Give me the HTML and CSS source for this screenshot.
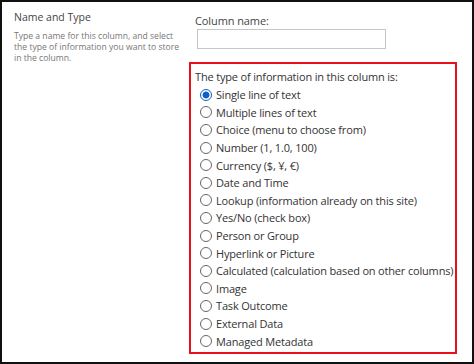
FILE: index.html
```html
<!DOCTYPE html>
<html>
<head>
<meta charset="utf-8">
<link rel="stylesheet" href="styles.css">
</head>
<body>
<div class="frame">
  <div class="left">
    <div class="section-title">Name and Type</div>
    <div class="section-desc">Type a name for this column, and select the type of information you want to store in the column.</div>
  </div>
  <div class="right">
    <div class="field-label">Column name:</div>
    <div class="text-input"></div>
    <div class="type-box">
      <div class="type-title">The type of information in this column is:</div>
      <ul class="options">
        <li class="option"><span class="radio checked"></span>Single line of text</li>
        <li class="option"><span class="radio"></span>Multiple lines of text</li>
        <li class="option"><span class="radio"></span>Choice (menu to choose from)</li>
        <li class="option"><span class="radio"></span>Number (1, 1.0, 100)</li>
        <li class="option"><span class="radio"></span>Currency ($, ¥, €)</li>
        <li class="option"><span class="radio"></span>Date and Time</li>
        <li class="option"><span class="radio"></span>Lookup (information already on this site)</li>
        <li class="option"><span class="radio"></span>Yes/No (check box)</li>
        <li class="option"><span class="radio"></span>Person or Group</li>
        <li class="option"><span class="radio"></span>Hyperlink or Picture</li>
        <li class="option"><span class="radio"></span>Calculated (calculation based on other columns)</li>
        <li class="option"><span class="radio"></span>Image</li>
        <li class="option"><span class="radio"></span>Task Outcome</li>
        <li class="option"><span class="radio"></span>External Data</li>
        <li class="option"><span class="radio"></span>Managed Metadata</li>
      </ul>
    </div>
  </div>
</div>
</body>
</html>
```
FILE: styles.css
```css
html, body {
  margin: 0;
  padding: 0;
  background: #ffffff;
}
body {
  font-family: "Open Sans", "Noto Sans", sans-serif;
  color: #333333;
}
.frame {
  box-sizing: border-box;
  width: 474px;
  height: 364px;
  border: 2px solid #111111;
  display: flex;
  overflow: hidden;
}
.left {
  width: 187px;
  box-sizing: border-box;
  padding: 7px 8px 0 12px;
}
.section-title {
  font-size: 10.5px;
  line-height: 16px;
  color: #444444;
}
.section-desc {
  margin-top: 6px;
  font-size: 8.6px;
  line-height: 11px;
  color: #777777;
}
.right {
  flex: 1;
  padding-top: 11px;
}
.field-label {
  padding-left: 6px;
  font-size: 11px;
  line-height: 15px;
  color: #444444;
  letter-spacing: -0.1px;
}
.text-input {
  margin: 1px 0 0 8px;
  width: 187px;
  height: 18px;
  border: 1px solid #c6c6c6;
}
.type-box {
  margin-top: 13px;
  width: 268px;
  height: 292px;
  border: 2.5px solid #e8101a;
  padding: 5px 0 0 4px;
  box-sizing: border-box;
}
.type-title {
  font-size: 11px;
  line-height: 15px;
  color: #333333;
  letter-spacing: -0.17px;
}
.options {
  list-style: none;
  margin: 2px 0 0 0;
  padding: 0 0 0 5px;
}
.option {
  display: flex;
  align-items: center;
  height: 17.6px;
  font-size: 11px;
  color: #333333;
  white-space: nowrap;
  letter-spacing: -0.17px;
}
.radio {
  box-sizing: border-box;
  width: 12px;
  height: 12px;
  border: 1px solid #666666;
  border-radius: 50%;
  margin-right: 4px;
  flex: none;
  background: #ffffff;
}
.radio.checked {
  border: 1.5px solid #0f62c8;
  background: radial-gradient(circle, #0f62c8 0 3.2px, #ffffff 3.8px);
}
```
